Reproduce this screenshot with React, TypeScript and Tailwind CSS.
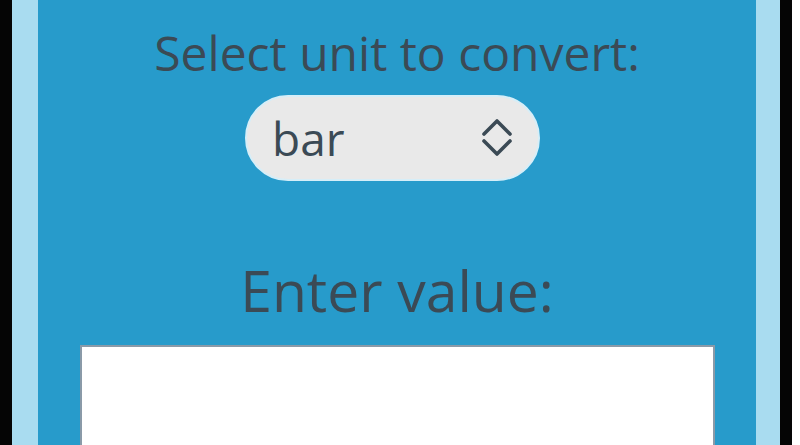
export default function App() {
    return (
        <div className="flex h-[445px] w-[800px] overflow-hidden bg-white" style={{ fontFamily: '"Open Sans", "Noto Sans", sans-serif' }}>
            {/* left frame */}
            <div className="h-full w-[12px] shrink-0 bg-[#050505]" />
            <div className="h-full w-[26px] shrink-0 bg-[#a9dcf0]" />

            <div className="flex min-w-0 flex-1 flex-col items-center overflow-hidden bg-[#279bcb] pt-[29px]">
                <label className="shrink-0 text-[48px] leading-[48px] text-[#3b4a55]">Select unit to convert:</label>
                <div className="mt-[18px] ml-[-9px] flex h-[86px] w-[295px] shrink-0 items-center justify-between rounded-full border-2 border-[#d6eef8] bg-[#e9e9e9] pl-[25px] pr-[26px]">
                    <span className="text-[46px] leading-[46px] text-[#3b4a55]">bar</span>
                    <svg width="30" height="38" viewBox="0 0 30 38" fill="none" stroke="#3b4a55" strokeWidth="3.6" strokeLinecap="round" strokeLinejoin="round">
                        <polyline points="2,15 15,2 28,15" />
                        <polyline points="2,22 15,35 28,22" />
                    </svg>
                </div>
                <label className="mt-[81px] shrink-0 text-[57px] leading-[57px] text-[#3b4a55]">Enter value:</label>
                <div className="mt-[26px] h-[120px] w-[635px] shrink-0 border-2 border-[#8a9aa8] bg-white" />
            </div>

            {/* right frame */}
            <div className="h-full w-[24px] shrink-0 bg-[#a9dcf0]" />
            <div className="h-full w-[12px] shrink-0 bg-[#050505]" />
            <div className="h-full w-[8px] shrink-0 bg-white" />
        </div>
    );
}
